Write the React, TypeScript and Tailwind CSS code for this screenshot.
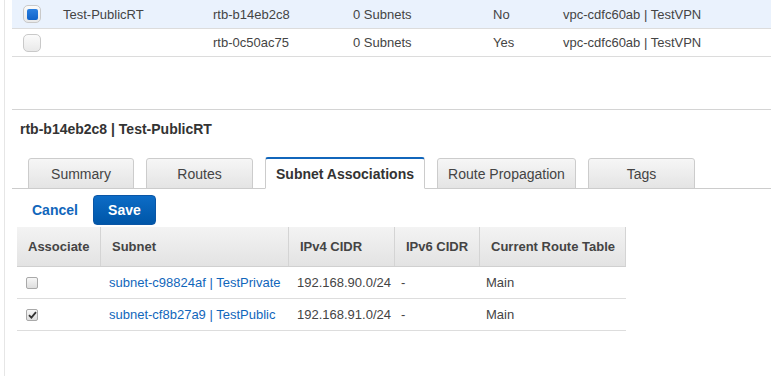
import React from 'react'

const topRows = [
  { name: 'Test-PublicRT', id: 'rtb-b14eb2c8', subnets: '0 Subnets', main: 'No', vpc: 'vpc-cdfc60ab | TestVPN', selected: true },
  { name: '', id: 'rtb-0c50ac75', subnets: '0 Subnets', main: 'Yes', vpc: 'vpc-cdfc60ab | TestVPN', selected: false },
]

const tabs = [
  { label: 'Summary', w: 'w-[106px]' },
  { label: 'Routes', w: 'w-[107px]' },
  { label: 'Subnet Associations', w: 'w-[160px]', active: true },
  { label: 'Route Propagation', w: 'w-[139px]' },
  { label: 'Tags', w: 'w-[107px]' },
]

const subnets = [
  { subnet: 'subnet-c98824af | TestPrivate', cidr: '192.168.90.0/24', checked: false },
  { subnet: 'subnet-cf8b27a9 | TestPublic', cidr: '192.168.91.0/24', checked: true },
]

const RowCheck = ({ on }: { on: boolean }) => (
  <div className="flex h-[18px] w-[18px] items-center justify-center rounded-[5px] border border-[#c9c9c9] bg-gradient-to-b from-[#fbfbfb] to-[#e9e9e9]">
    {on && <div className="h-[11px] w-[11px] rounded-[2px] bg-gradient-to-b from-[#2a7fe0] to-[#1063c9]" />}
  </div>
)

const SmallCheck = ({ on }: { on: boolean }) => (
  <div className="flex h-[12px] w-[12px] items-center justify-center rounded-[2px] border border-[#a9a9a9] bg-gradient-to-b from-[#f7f7f7] to-[#dedede]">
    {on && (
      <svg width="9" height="8" viewBox="0 0 9 8">
        <path d="M1 4.2 L3.4 6.6 L8 1.2" stroke="#333" strokeWidth="1.8" fill="none" />
      </svg>
    )}
  </div>
)

export default function App() {
  return (
    <div className="h-[376px] w-[771px] overflow-hidden bg-white pl-1 font-['Liberation_Sans',Arial,sans-serif] text-[#444]">
      <div className="h-full border-l border-[#e6e6e6] pl-[7px]">
        {/* route table list */}
        <div className="text-[13px]">
          {topRows.map((r) => (
            <div
              key={r.id}
              className={`flex items-center border-b border-[#dcdcdc] ${r.selected ? 'h-[29px] bg-[#eaf2fd]' : 'h-[28px]'}`}
            >
              <div className="w-[51px] pl-[11px]">
                <RowCheck on={r.selected} />
              </div>
              <div className="w-[150px] pt-px">{r.name}</div>
              <div className="w-[140px] pt-px">{r.id}</div>
              <div className="w-[140px] pt-px">{r.subnets}</div>
              <div className="w-[70px] pt-px">{r.main}</div>
              <div className="pt-px">{r.vpc}</div>
            </div>
          ))}
        </div>
        <div className="h-[53px] border-b border-[#d4d4d4]" />

        {/* details pane */}
        <div className="pl-2 pt-[11px] text-[14px] font-bold leading-4 text-[#333]">rtb-b14eb2c8 | Test-PublicRT</div>

        <div className="mt-[21px] flex h-[31px] items-end gap-3 border-b border-[#cccccc] pl-4">
          {tabs.map((t) =>
            t.active ? (
              <div
                key={t.label}
                className={`${t.w} -mb-px flex h-[32px] items-center justify-center rounded-t-[3px] border border-b-white border-[#cccccc] border-t-2 border-t-[#1166bb] bg-white pt-px text-[14px] font-bold text-[#333]`}
              >
                {t.label}
              </div>
            ) : (
              <div
                key={t.label}
                className={`${t.w} -mb-px flex h-[31px] items-center justify-center rounded-t-[3px] border border-[#cccccc] bg-gradient-to-b from-[#f6f6f6] to-[#e4e4e4] pt-px text-[14px] text-[#444]`}
              >
                {t.label}
              </div>
            ),
          )}
        </div>

        <div className="flex items-center pt-[6px]">
          <span className="ml-5 text-[14px] font-bold text-[#1166bb]">Cancel</span>
          <button className="ml-[15px] h-[30px] w-[63px] rounded-[4px] border border-[#0a56a6] bg-gradient-to-b from-[#0d6cc6] to-[#0056a8] text-[14px] font-bold text-white">
            Save
          </button>
        </div>

        {/* subnet table */}
        <div className="ml-[5px] mt-[2px] w-[609px] text-[13px]">
          <div className="flex h-[40px] border-b border-[#d0d0d0] bg-gradient-to-b from-[#f3f3f3] to-[#e3e3e3] font-bold text-[#444]">
            <div className="flex w-[84px] items-center border-r border-[#d4d4d4] pl-[11px] pt-px">Associate</div>
            <div className="flex w-[188px] items-center border-r border-[#d4d4d4] pl-[11px] pt-px">Subnet</div>
            <div className="flex w-[106px] items-center border-r border-[#d4d4d4] pl-[11px] pt-px">IPv4 CIDR</div>
            <div className="flex w-[85px] items-center border-r border-[#d4d4d4] pl-[11px] pt-px">IPv6 CIDR</div>
            <div className="flex flex-1 items-center border-r border-[#d4d4d4] pl-[11px] pt-px">Current Route Table</div>
          </div>
          {subnets.map((s) => (
            <div key={s.subnet} className="flex h-[32px] items-center border-b border-[#dddddd]">
              <div className="w-[84px] pl-[9px]">
                <SmallCheck on={s.checked} />
              </div>
              <div className="w-[188px] pl-2 pt-px text-[#1166bb]">{s.subnet}</div>
              <div className="w-[106px] pl-2 pt-px">{s.cidr}</div>
              <div className="w-[85px] pl-[6px] pt-px">-</div>
              <div className="pl-[6px] pt-px">Main</div>
            </div>
          ))}
        </div>
      </div>
    </div>
  )
}
